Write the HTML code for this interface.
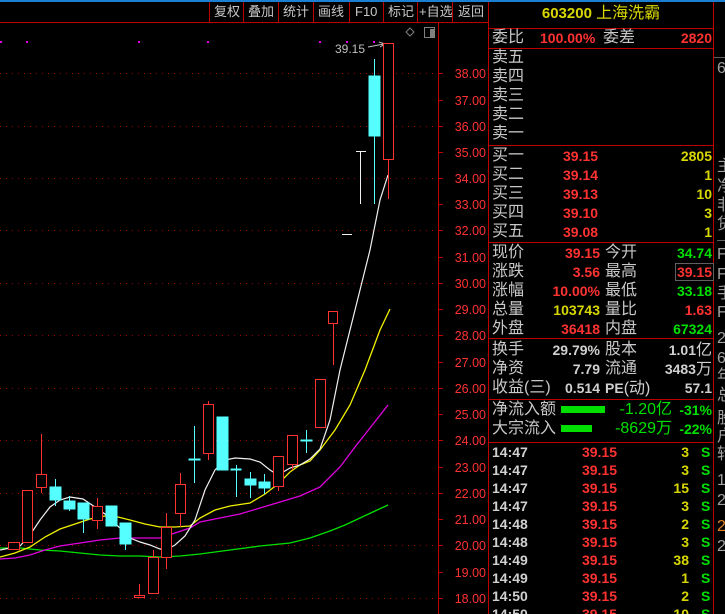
<!DOCTYPE html>
<html><head><meta charset="utf-8"><style>
*{margin:0;padding:0;box-sizing:border-box}
body{width:725px;height:614px;background:#000;overflow:hidden;position:relative;font-family:"Liberation Sans","Noto Sans CJK SC",sans-serif;}
.t{position:absolute;white-space:nowrap;font-size:16px;line-height:18px;color:#c8c8c8}
.n{font-weight:bold;font-size:14px}
.r{color:#ff3232}.y{color:#d8d800}.g{color:#00e000}.w{color:#d0d0d0}
.ra{text-align:right}
.hl{position:absolute;height:1px;background:#c00000}
.vl{position:absolute;width:1px;background:#c00000}
.tb{position:absolute;top:3px;font-size:13px;color:#c8c8c8;line-height:18px}
.u{font-weight:normal;font-size:16px}
</style></head><body>
<div style="position:absolute;left:0;top:0;width:725px;height:2px;background:#1a7fd0"></div>
<div class="hl" style="left:0;top:22px;width:488px"></div>
<div class="vl" style="left:209px;top:2px;height:20px"></div>
<div class="vl" style="left:243px;top:2px;height:20px"></div>
<div class="vl" style="left:278px;top:2px;height:20px"></div>
<div class="vl" style="left:313px;top:2px;height:20px"></div>
<div class="vl" style="left:349px;top:2px;height:20px"></div>
<div class="vl" style="left:383px;top:2px;height:20px"></div>
<div class="vl" style="left:417px;top:2px;height:20px"></div>
<div class="vl" style="left:452px;top:2px;height:20px"></div>
<div class="tb" style="left:214px">复权</div>
<div class="tb" style="left:248px">叠加</div>
<div class="tb" style="left:283px">统计</div>
<div class="tb" style="left:318px">画线</div>
<div class="tb" style="left:355px">F10</div>
<div class="tb" style="left:388px">标记</div>
<div class="tb" style="left:419px">+自选</div>
<div class="tb" style="left:458px">返回</div>

<svg style="position:absolute;left:0;top:0" width="488" height="614">
<g stroke="#a00000" stroke-dasharray="1,5" stroke-width="1">
<line x1="0" y1="73.5" x2="438" y2="73.5"/><line x1="0" y1="126.5" x2="438" y2="126.5"/><line x1="0" y1="178.5" x2="438" y2="178.5"/><line x1="0" y1="230.5" x2="438" y2="230.5"/><line x1="0" y1="283.5" x2="438" y2="283.5"/><line x1="0" y1="335.5" x2="438" y2="335.5"/><line x1="0" y1="388.5" x2="438" y2="388.5"/><line x1="0" y1="440.5" x2="438" y2="440.5"/><line x1="0" y1="493.5" x2="438" y2="493.5"/><line x1="0" y1="545.5" x2="438" y2="545.5"/><line x1="0" y1="598.5" x2="438" y2="598.5"/>
</g>
<line x1="438.5" y1="22" x2="438.5" y2="614" stroke="#c00000"/>
<g stroke="#c00000"><line x1="439" y1="73.5" x2="443" y2="73.5"/><line x1="439" y1="100.5" x2="443" y2="100.5"/><line x1="439" y1="126.5" x2="443" y2="126.5"/><line x1="439" y1="152.5" x2="443" y2="152.5"/><line x1="439" y1="178.5" x2="443" y2="178.5"/><line x1="439" y1="204.5" x2="443" y2="204.5"/><line x1="439" y1="230.5" x2="443" y2="230.5"/><line x1="439" y1="257.5" x2="443" y2="257.5"/><line x1="439" y1="283.5" x2="443" y2="283.5"/><line x1="439" y1="309.5" x2="443" y2="309.5"/><line x1="439" y1="335.5" x2="443" y2="335.5"/><line x1="439" y1="362.5" x2="443" y2="362.5"/><line x1="439" y1="388.5" x2="443" y2="388.5"/><line x1="439" y1="414.5" x2="443" y2="414.5"/><line x1="439" y1="440.5" x2="443" y2="440.5"/><line x1="439" y1="467.5" x2="443" y2="467.5"/><line x1="439" y1="493.5" x2="443" y2="493.5"/><line x1="439" y1="519.5" x2="443" y2="519.5"/><line x1="439" y1="545.5" x2="443" y2="545.5"/><line x1="439" y1="572.5" x2="443" y2="572.5"/><line x1="439" y1="598.5" x2="443" y2="598.5"/></g>
<g fill="#ff3232" font-family="Liberation Sans,sans-serif" font-size="12.5" text-anchor="end">
<text x="486" y="78">38.00</text><text x="486" y="105">37.00</text><text x="486" y="131">36.00</text><text x="486" y="157">35.00</text><text x="486" y="183">34.00</text><text x="486" y="209">33.00</text><text x="486" y="235">32.00</text><text x="486" y="262">31.00</text><text x="486" y="288">30.00</text><text x="486" y="314">29.00</text><text x="486" y="340">28.00</text><text x="486" y="367">27.00</text><text x="486" y="393">26.00</text><text x="486" y="419">25.00</text><text x="486" y="445">24.00</text><text x="486" y="472">23.00</text><text x="486" y="498">22.00</text><text x="486" y="524">21.00</text><text x="486" y="550">20.00</text><text x="486" y="577">19.00</text><text x="486" y="603">18.00</text>
</g>
<g fill="#e000e0"><rect x="0" y="41" width="2" height="2"/><rect x="26" y="41" width="2" height="2"/><rect x="138" y="41" width="2" height="2"/><rect x="207" y="41" width="2" height="2"/><rect x="319" y="41" width="2" height="2"/><rect x="346" y="41" width="2" height="2"/><rect x="373" y="41" width="2" height="2"/></g>
<text x="335" y="53" fill="#c0c0c0" font-family="Liberation Sans,sans-serif" font-size="12">39.15</text>
<path d="M368 47 L384 44 M379 42 L385 44 L380 47" stroke="#c0c0c0" fill="none"/>
<path d="M410 28 L414 32 L410 36 L406 32 Z" stroke="#808080" fill="none"/>
<rect x="424.5" y="27.5" width="10" height="10" stroke="#808080" fill="none"/><rect x="430" y="29" width="4" height="8" fill="#808080"/>
<polyline fill="none" stroke="#00e000" stroke-width="1.3" points="0,548 20,548 40,550 60,551 80,553 100,555 120,556 140,556 160,557 180,556 200,554 230,550 260,546 290,543 310,538 330,531 345,525 360,518 375,511 388,505"/>
<polyline fill="none" stroke="#e000e0" stroke-width="1.3" points="0,559 15,558 30,555 45,550 60,546 80,543 100,540 120,538 140,538 160,538 175,533 190,528 200,522 220,518 240,514 260,508 280,502 300,496 320,487 340,467 355,447 370,428 388,405"/>
<polyline fill="none" stroke="#f0f000" stroke-width="1.3" points="0,557 15,553 30,547 45,537 60,529 75,524 90,519 105,516 118,517 130,520 145,524 160,527 175,527 190,526 200,518 215,510 230,506 250,503 265,494 278,484 290,472 300,465 310,461 320,450 335,430 350,405 365,370 380,330 390,309"/>
<polyline fill="none" stroke="#f0f0f0" stroke-width="1.2" points="0,550 10,548 20,546 30,535 40,520 50,507 60,500 70,497 83,499 95,507 105,514 120,528 130,538 140,542 150,545 160,549 166,550 175,545 185,536 195,520 205,490 215,470 225,460 235,458 250,459 260,462 270,470 278,475 290,468 300,465 310,459 320,449 330,420 340,370 350,330 360,290 370,250 380,200 388,175"/>
<g stroke="#ff3232" fill="#000" stroke-width="1">
<rect x="8.5" y="542.5" width="11" height="7"/>
<rect x="22.5" y="490.5" width="10" height="52"/>
<line x1="41.5" y1="434" x2="41.5" y2="474"/><line x1="41.5" y1="487" x2="41.5" y2="493"/><rect x="36.5" y="474.5" width="10" height="13"/>
<line x1="97.5" y1="498" x2="97.5" y2="506"/><line x1="97.5" y1="520" x2="97.5" y2="529"/><rect x="92.5" y="506.5" width="10" height="14"/>
<line x1="139.5" y1="584" x2="139.5" y2="595"/><rect x="134.5" y="595.5" width="10" height="2"/>
<line x1="153.5" y1="550" x2="153.5" y2="557"/><rect x="148.5" y="557.5" width="10" height="36"/>
<line x1="166.5" y1="513" x2="166.5" y2="527"/><line x1="166.5" y1="557" x2="166.5" y2="569"/><rect x="161.5" y="527.5" width="10" height="30"/>
<line x1="180.5" y1="473" x2="180.5" y2="484"/><line x1="180.5" y1="513" x2="180.5" y2="527"/><rect x="175.5" y="484.5" width="10" height="29"/>
<line x1="208.5" y1="401" x2="208.5" y2="404"/><line x1="208.5" y1="453" x2="208.5" y2="460"/><rect x="203.5" y="404.5" width="10" height="49"/>
<line x1="278.5" y1="486" x2="278.5" y2="491"/><rect x="273.5" y="456.5" width="10" height="30"/>
<line x1="292.5" y1="464" x2="292.5" y2="470"/><rect x="287.5" y="435.5" width="10" height="29"/>
<rect x="315.5" y="379.5" width="10" height="48"/>
<line x1="333.5" y1="323" x2="333.5" y2="365"/><rect x="328.5" y="311.5" width="9" height="12"/>
<line x1="388.5" y1="159" x2="388.5" y2="199"/><rect x="383.5" y="43.5" width="10" height="116"/>
</g>
<g fill="#55ffff" stroke="#55ffff">
<line x1="55.5" y1="479" x2="55.5" y2="506"/><rect x="50" y="487" width="11" height="13"/>
<line x1="69.5" y1="496" x2="69.5" y2="511"/><rect x="64" y="501" width="11" height="8"/>
<line x1="83.5" y1="503" x2="83.5" y2="533"/><rect x="78" y="503" width="11" height="16"/>
<rect x="106" y="506" width="11" height="20"/>
<line x1="125.5" y1="523" x2="125.5" y2="550"/><rect x="120" y="523" width="11" height="21"/>
<line x1="194.5" y1="426" x2="194.5" y2="483"/><rect x="189" y="459" width="11" height="1"/>
<rect x="217" y="417" width="11" height="53"/>
<line x1="236.5" y1="465" x2="236.5" y2="497"/><rect x="231" y="469" width="10" height="1"/>
<line x1="250.5" y1="472" x2="250.5" y2="498"/><rect x="245" y="479" width="11" height="6"/>
<line x1="264.5" y1="474" x2="264.5" y2="494"/><rect x="259" y="482" width="11" height="6"/>
<line x1="306.5" y1="430" x2="306.5" y2="453"/><rect x="301" y="440" width="11" height="1"/>
<line x1="374.5" y1="59" x2="374.5" y2="204"/><rect x="369" y="76" width="11" height="60"/>
</g>
<g stroke="#f0f0f0"><line x1="342" y1="234.5" x2="352" y2="234.5"/><line x1="356" y1="151.5" x2="366" y2="151.5"/><line x1="360.5" y1="151" x2="360.5" y2="204"/></g>
</svg>

<div class="vl" style="left:488px;top:2px;height:612px"></div>
<div class="vl" style="left:713px;top:2px;height:612px"></div>
<div class="hl" style="left:488px;top:28px;width:226px"></div>
<div class="hl" style="left:488px;top:48px;width:226px"></div>
<div class="hl" style="left:488px;top:145px;width:226px"></div>
<div class="hl" style="left:488px;top:242px;width:226px"></div>
<div class="hl" style="left:488px;top:338px;width:226px"></div>
<div class="hl" style="left:488px;top:399px;width:226px"></div>
<div class="hl" style="left:488px;top:442px;width:226px"></div>

<div class="t n y" style="left:488px;width:226px;top:5px;text-align:center;font-size:15px">603200 <span class="u">上海洗霸</span></div>
<div class="t" style="left:492px;top:29px">委比</div>
<div class="t n r" style="left:540px;top:29px">100.00%</div>
<div class="t" style="left:603px;top:29px">委差</div>
<div class="t n r ra" style="left:640px;width:72px;top:29px">2820</div>

<div class="t" style="left:492px;top:49px">卖五</div>
<div class="t" style="left:492px;top:68px">卖四</div>
<div class="t" style="left:492px;top:87px">卖三</div>
<div class="t" style="left:492px;top:106px">卖二</div>
<div class="t" style="left:492px;top:125px">卖一</div>

<div class="t" style="left:492px;top:147px">买一</div><div class="t n r" style="left:563px;top:147px">39.15</div><div class="t n y ra" style="left:640px;width:72px;top:147px">2805</div>
<div class="t" style="left:492px;top:166px">买二</div><div class="t n r" style="left:563px;top:166px">39.14</div><div class="t n y ra" style="left:640px;width:72px;top:166px">1</div>
<div class="t" style="left:492px;top:185px">买三</div><div class="t n r" style="left:563px;top:185px">39.13</div><div class="t n y ra" style="left:640px;width:72px;top:185px">10</div>
<div class="t" style="left:492px;top:204px">买四</div><div class="t n r" style="left:563px;top:204px">39.10</div><div class="t n y ra" style="left:640px;width:72px;top:204px">3</div>
<div class="t" style="left:492px;top:223px">买五</div><div class="t n r" style="left:563px;top:223px">39.08</div><div class="t n y ra" style="left:640px;width:72px;top:223px">1</div>

<div class="t" style="left:492px;top:244px">现价</div><div class="t n r ra" style="left:530px;width:70px;top:244px">39.15</div><div class="t" style="left:605px;top:244px">今开</div><div class="t n g ra" style="left:640px;width:72px;top:244px">34.74</div>
<div class="t" style="left:492px;top:263px">涨跌</div><div class="t n r ra" style="left:530px;width:70px;top:263px">3.56</div><div class="t" style="left:605px;top:263px">最高</div><div class="t n r ra" style="left:640px;width:72px;top:263px">39.15</div>
<div style="position:absolute;left:675px;top:263px;width:39px;height:18px;border:1px solid #606060"></div>
<div class="t" style="left:492px;top:282px">涨幅</div><div class="t n r ra" style="left:520px;width:80px;top:282px">10.00%</div><div class="t" style="left:605px;top:282px">最低</div><div class="t n g ra" style="left:640px;width:72px;top:282px">33.18</div>
<div class="t" style="left:492px;top:301px">总量</div><div class="t n y ra" style="left:520px;width:80px;top:301px">103743</div><div class="t" style="left:605px;top:301px">量比</div><div class="t n r ra" style="left:640px;width:72px;top:301px">1.63</div>
<div class="t" style="left:492px;top:320px">外盘</div><div class="t n r ra" style="left:520px;width:80px;top:320px">36418</div><div class="t" style="left:605px;top:320px">内盘</div><div class="t n g ra" style="left:640px;width:72px;top:320px">67324</div>

<div class="t" style="left:492px;top:341px">换手</div><div class="t n w ra" style="left:520px;width:80px;top:341px">29.79%</div><div class="t" style="left:605px;top:341px">股本</div><div class="t n w ra" style="left:640px;width:72px;top:341px">1.01<span class="u">亿</span></div>
<div class="t" style="left:492px;top:360px">净资</div><div class="t n w ra" style="left:520px;width:80px;top:360px">7.79</div><div class="t" style="left:605px;top:360px">流通</div><div class="t n w ra" style="left:640px;width:72px;top:360px">3483<span class="u">万</span></div>
<div class="t" style="left:492px;top:379px">收益(三)</div><div class="t n w ra" style="left:520px;width:80px;top:379px">0.514</div><div class="t n w" style="left:605px;top:379px">PE<span class="u">(动)</span></div><div class="t n w ra" style="left:640px;width:72px;top:379px">57.1</div>

<div class="t" style="left:492px;top:401px">净流入额</div><div style="position:absolute;left:561px;top:406px;width:44px;height:7px;background:#00e000"></div><div class="t g ra" style="left:600px;width:72px;top:401px">-1.20亿</div><div class="t n g ra" style="left:672px;width:40px;top:401px">-31%</div>
<div class="t" style="left:492px;top:420px">大宗流入</div><div style="position:absolute;left:561px;top:425px;width:31px;height:7px;background:#00e000"></div><div class="t g ra" style="left:600px;width:72px;top:420px">-8629万</div><div class="t n g ra" style="left:672px;width:40px;top:420px">-22%</div>

<div style="position:absolute;left:489px;top:443px;width:224px;height:171px;overflow:hidden">
<div style="position:relative">
<div class="t n w" style="left:3px;top:0px">14:47</div><div class="t n r ra" style="left:60px;width:68px;top:0px">39.15</div><div class="t n y ra" style="left:160px;width:40px;top:0px">3</div><div class="t n g" style="left:212px;top:0px">S</div>
<div class="t n w" style="left:3px;top:18px">14:47</div><div class="t n r ra" style="left:60px;width:68px;top:18px">39.15</div><div class="t n y ra" style="left:160px;width:40px;top:18px">3</div><div class="t n g" style="left:212px;top:18px">S</div>
<div class="t n w" style="left:3px;top:36px">14:47</div><div class="t n r ra" style="left:60px;width:68px;top:36px">39.15</div><div class="t n y ra" style="left:160px;width:40px;top:36px">15</div><div class="t n g" style="left:212px;top:36px">S</div>
<div class="t n w" style="left:3px;top:54px">14:47</div><div class="t n r ra" style="left:60px;width:68px;top:54px">39.15</div><div class="t n y ra" style="left:160px;width:40px;top:54px">3</div><div class="t n g" style="left:212px;top:54px">S</div>
<div class="t n w" style="left:3px;top:72px">14:48</div><div class="t n r ra" style="left:60px;width:68px;top:72px">39.15</div><div class="t n y ra" style="left:160px;width:40px;top:72px">2</div><div class="t n g" style="left:212px;top:72px">S</div>
<div class="t n w" style="left:3px;top:90px">14:48</div><div class="t n r ra" style="left:60px;width:68px;top:90px">39.15</div><div class="t n y ra" style="left:160px;width:40px;top:90px">3</div><div class="t n g" style="left:212px;top:90px">S</div>
<div class="t n w" style="left:3px;top:108px">14:49</div><div class="t n r ra" style="left:60px;width:68px;top:108px">39.15</div><div class="t n y ra" style="left:160px;width:40px;top:108px">38</div><div class="t n g" style="left:212px;top:108px">S</div>
<div class="t n w" style="left:3px;top:126px">14:49</div><div class="t n r ra" style="left:60px;width:68px;top:126px">39.15</div><div class="t n y ra" style="left:160px;width:40px;top:126px">1</div><div class="t n g" style="left:212px;top:126px">S</div>
<div class="t n w" style="left:3px;top:144px">14:50</div><div class="t n r ra" style="left:60px;width:68px;top:144px">39.15</div><div class="t n y ra" style="left:160px;width:40px;top:144px">2</div><div class="t n g" style="left:212px;top:144px">S</div>
<div class="t n w" style="left:3px;top:162px">14:50</div><div class="t n r ra" style="left:60px;width:68px;top:162px">39.15</div><div class="t n y ra" style="left:160px;width:40px;top:162px">10</div><div class="t n g" style="left:212px;top:162px">S</div>
</div></div>

<div style="position:absolute;left:714px;top:0;width:11px;height:614px;overflow:hidden;color:#a0a0a0;font-size:16px;line-height:18px">
<div style="position:absolute;top:57px;left:0;width:11px;height:1px;background:#606060"></div>
<div style="position:absolute;left:3px;top:60px">6</div>
<div style="position:absolute;left:3px;top:158px">主</div>
<div style="position:absolute;left:3px;top:178px">净</div>
<div style="position:absolute;left:3px;top:197px">非</div>
<div style="position:absolute;left:3px;top:216px">贷</div>
<div style="position:absolute;left:3px;top:240px;width:11px;height:1px;background:#606060"></div>
<div style="position:absolute;left:3px;top:246px">F</div>
<div style="position:absolute;left:3px;top:266px">F</div>
<div style="position:absolute;left:3px;top:285px">手</div>
<div style="position:absolute;left:3px;top:304px">F</div>
<div style="position:absolute;left:3px;top:330px">2</div>
<div style="position:absolute;left:3px;top:350px">6</div>
<div style="position:absolute;left:3px;top:368px">年</div>
<div style="position:absolute;left:3px;top:387px">总</div>
<div style="position:absolute;left:3px;top:410px">股</div>
<div style="position:absolute;left:3px;top:428px">户</div>
<div style="position:absolute;left:3px;top:446px">转</div>
<div style="position:absolute;left:3px;top:472px">1</div>
<div style="position:absolute;left:3px;top:492px">2</div>
<div style="position:absolute;left:3px;top:518px;color:#e08020">2</div>
<div style="position:absolute;left:3px;top:538px">2</div>
</div>
</body></html>
